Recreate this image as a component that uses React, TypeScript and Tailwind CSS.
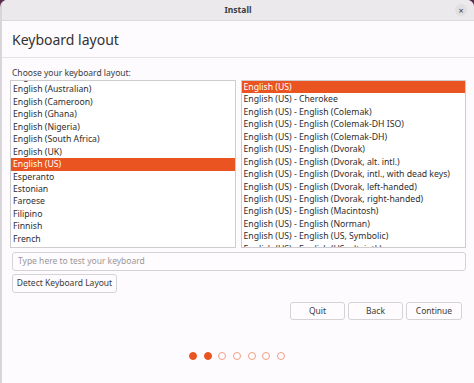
const LEFT = [
  "English",
  "English (Australian)",
  "English (Cameroon)",
  "English (Ghana)",
  "English (Nigeria)",
  "English (South Africa)",
  "English (UK)",
  "English (US)",
  "Esperanto",
  "Estonian",
  "Faroese",
  "Filipino",
  "Finnish",
  "French",
];

const RIGHT = [
  "English (US)",
  "English (US) - Cherokee",
  "English (US) - English (Colemak)",
  "English (US) - English (Colemak-DH ISO)",
  "English (US) - English (Colemak-DH)",
  "English (US) - English (Dvorak)",
  "English (US) - English (Dvorak, alt. intl.)",
  "English (US) - English (Dvorak, intl., with dead keys)",
  "English (US) - English (Dvorak, left-handed)",
  "English (US) - English (Dvorak, right-handed)",
  "English (US) - English (Macintosh)",
  "English (US) - English (Norman)",
  "English (US) - English (US, Symbolic)",
  "English (US) - English (US, alt. intl.)",
];

function Row({ label, selected }: { label: string; selected?: boolean }) {
  return (
    <div
      className={`h-[12.45px] leading-[12.45px] px-[2px] whitespace-nowrap ${
        selected ? "bg-[#e95420] text-white" : "text-[#2e2e2e]"
      }`}
    >
      {label}
    </div>
  );
}

function Btn({ label, className = "" }: { label: string; className?: string }) {
  return (
    <div
      className={`flex items-center justify-center rounded-[3px] border border-[#d6d3d6] bg-[#fefcfe] text-[#3a3a3a] text-[8.5px] ${className}`}
    >
      {label}
    </div>
  );
}

export default function App() {
  return (
    <div
      className="w-[474px] h-[383px] bg-[#5a2a4a] overflow-hidden"
      style={{ fontFamily: '"Noto Sans", "DejaVu Sans", sans-serif' }}
    >
      <div className="w-[474px] h-[383px] rounded-t-[7px] bg-[#fdfbfd] border-l-2 border-[#d9d6d9] flex flex-col overflow-hidden">
        <div className="h-[21px] shrink-0 bg-[#ebe9eb] border-b border-[#dcd9dc] relative flex items-center justify-center">
          <span className="text-[8.5px] font-bold text-[#3c3c3c]">Install</span>
          <span className="absolute right-[7px] top-[4px] w-[12px] h-[12px] rounded-full bg-[#e2dfe2] flex items-center justify-center text-[9px] leading-none text-[#444]">
            ×
          </span>
        </div>

        <div className="h-[37px] shrink-0 flex items-center pl-[10px] border-b border-[#e6e3e6]">
          <span className="text-[14px] text-[#333]">Keyboard layout</span>
        </div>

        <div className="pl-[8px] pr-[8px] pt-[9px] flex flex-col">
          <div className="text-[8.5px] text-[#3a3a3a] h-[12px] leading-[12px] pl-[2px]">
            Choose your keyboard layout:
          </div>

          <div className="flex gap-[5px] mt-[1px] text-[8.7px]">
            <div className="w-[226px] h-[168px] border border-[#cfcccf] bg-white overflow-hidden">
              <div className="-mt-[10px]">
                {LEFT.map((l, i) => (
                  <Row key={i} label={l} selected={i === 7} />
                ))}
              </div>
            </div>
            <div className="w-[226px] h-[168px] border border-[#cfcccf] bg-white overflow-hidden">
              {RIGHT.map((l, i) => (
                <Row key={i} label={l} selected={i === 0} />
              ))}
            </div>
          </div>

          <div className="mt-[4px] ml-[2px] w-[454px] h-[19px] rounded-[3px] border border-[#d6d3d6] bg-[#fefcfe] flex items-center pl-[5px] text-[8.5px] text-[#9a979a]">
            Type here to test your keyboard
          </div>

          <Btn label="Detect Keyboard Layout" className="mt-[3px] ml-[2px] w-[105px] h-[19px]" />

          <div className="flex justify-end gap-[3px] mt-[9px] pr-[4px]">
            <Btn label="Quit" className="w-[55px] h-[18px]" />
            <Btn label="Back" className="w-[55px] h-[18px]" />
            <Btn label="Continue" className="w-[56px] h-[18px]" />
          </div>

          <div className="flex justify-center gap-[6.7px] mt-[32px] -ml-[2px]">
            {[0, 1, 2, 3, 4, 5, 6].map((i) => (
              <span
                key={i}
                className={`w-[8px] h-[8px] rounded-full border ${
                  i < 2 ? "bg-[#e95420] border-[#e95420]" : "bg-transparent border-[#f0a080]"
                }`}
              />
            ))}
          </div>
        </div>
      </div>
    </div>
  );
}
